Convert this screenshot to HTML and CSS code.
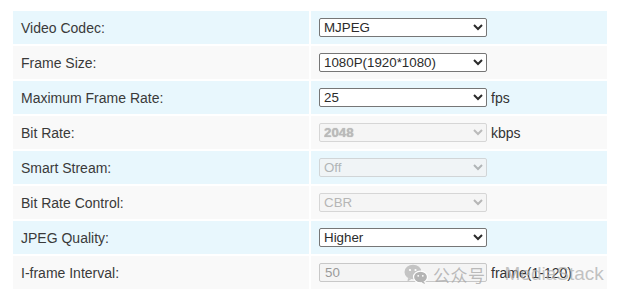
FILE: index.html
```html
<!DOCTYPE html>
<html>
<head>
<meta charset="utf-8">
<link rel="stylesheet" href="styles.css">
</head>
<body>
<div class="table">
  <div class="row blue">
    <div class="label">Video Codec:</div>
    <div class="value"><select class="sel"><option>MJPEG</option></select></div>
  </div>
  <div class="row grey">
    <div class="label">Frame Size:</div>
    <div class="value"><select class="sel"><option>1080P(1920*1080)</option></select></div>
  </div>
  <div class="row blue">
    <div class="label">Maximum Frame Rate:</div>
    <div class="value"><select class="sel"><option>25</option></select><span class="unit">fps</span></div>
  </div>
  <div class="row grey">
    <div class="label">Bit Rate:</div>
    <div class="value"><select class="sel dis bold" disabled><option>2048</option></select><span class="unit">kbps</span></div>
  </div>
  <div class="row blue">
    <div class="label">Smart Stream:</div>
    <div class="value"><select class="sel dis" disabled><option>Off</option></select></div>
  </div>
  <div class="row grey">
    <div class="label">Bit Rate Control:</div>
    <div class="value"><select class="sel dis" disabled><option>CBR</option></select></div>
  </div>
  <div class="row blue">
    <div class="label">JPEG Quality:</div>
    <div class="value"><select class="sel"><option>Higher</option></select></div>
  </div>
  <div class="row grey">
    <div class="label">I-frame Interval:</div>
    <div class="value"><input class="inp" type="text" value="50" disabled><span class="unit">frame(1-120)</span></div>
  </div>
</div>
<div class="watermark">
  <svg class="wx" width="24" height="20" viewBox="0 0 24 20">
    <ellipse cx="9" cy="8" rx="8.5" ry="7.3" fill="#c4c4c4"/>
    <path d="M4 14 L3.5 17.5 L7.5 15 Z" fill="#c4c4c4"/>
    <ellipse cx="16.5" cy="13" rx="7" ry="5.8" fill="#b4b4b4" stroke="#fff" stroke-width="1.2"/>
    <path d="M20 17.5 L21 20 L17.5 18.5 Z" fill="#b4b4b4"/>
    <circle cx="6" cy="6" r="1.1" fill="#fff"/>
    <circle cx="11.5" cy="6" r="1.1" fill="#fff"/>
    <circle cx="14.2" cy="11.8" r="0.9" fill="#fff"/>
    <circle cx="18.8" cy="11.8" r="0.9" fill="#fff"/>
  </svg>
  <span class="wm-cn">公众号</span>
  <span class="wm-en">MediaStack</span>
</div>
</body>
</html>
```

FILE: styles.css
```css
html, body {
  margin: 0;
  padding: 0;
  background: #ffffff;
}
body {
  width: 622px;
  height: 301px;
  position: relative;
  overflow: hidden;
  font-family: "Liberation Sans", Arial, sans-serif;
}
.table {
  padding: 11px 0 0 13px;
  display: flex;
  flex-direction: column;
  gap: 2px;
}
.row {
  display: grid;
  grid-template-columns: 296px 296px;
  column-gap: 2px;
  height: 33px;
}
.row.blue .label, .row.blue .value { background: #e8f7fd; }
.row.grey .label, .row.grey .value { background: #f9f9f9; }
.label {
  display: flex;
  align-items: center;
  padding-left: 8px;
  font-size: 14px;
  color: #3a3a3a;
}
.value {
  display: flex;
  align-items: center;
  padding-left: 8px;
}
.sel {
  width: 168px;
  height: 19px;
  margin: 0;
  font-family: "Liberation Sans", Arial, sans-serif;
  font-size: 13.33px;
  color: #2b2b2b;
  border: 1px solid #767676;
  border-radius: 2px;
  background: #fff;
  padding: 0;
  box-sizing: border-box;
}
.sel.dis {
  color: #9a9a9a;
  border-color: #c8c8c8;
  background: #f4f4f4;
}
.sel.bold {
  color: #a0a0a0;
  font-weight: bold;
  text-shadow: 0 0 1px #999;
}
.inp {
  width: 168px;
  height: 19px;
  margin: 0;
  box-sizing: border-box;
  font-family: "Liberation Sans", Arial, sans-serif;
  font-size: 13.33px;
  color: #9a9a9a;
  border: 1px solid #c8c8c8;
  border-radius: 2px;
  background: #f4f4f4;
  padding: 0 0 0 5px;
}
.unit {
  margin-left: 4px;
  font-size: 14px;
  color: #333;
}
.watermark {
  position: absolute;
  left: 404px;
  top: 262px;
  display: flex;
  align-items: center;
  height: 24px;
  pointer-events: none;
}
.wx { margin-right: 5px; }
.wm-cn {
  font-family: "Noto Sans CJK SC", sans-serif;
  font-size: 17px;
  color: rgba(170,170,170,0.8);
  letter-spacing: 0.5px;
}
.wm-en {
  margin-left: 19px;
  font-family: "Liberation Sans", Arial, sans-serif;
  font-size: 19px;
  color: rgba(175,175,175,0.75);
}
```
